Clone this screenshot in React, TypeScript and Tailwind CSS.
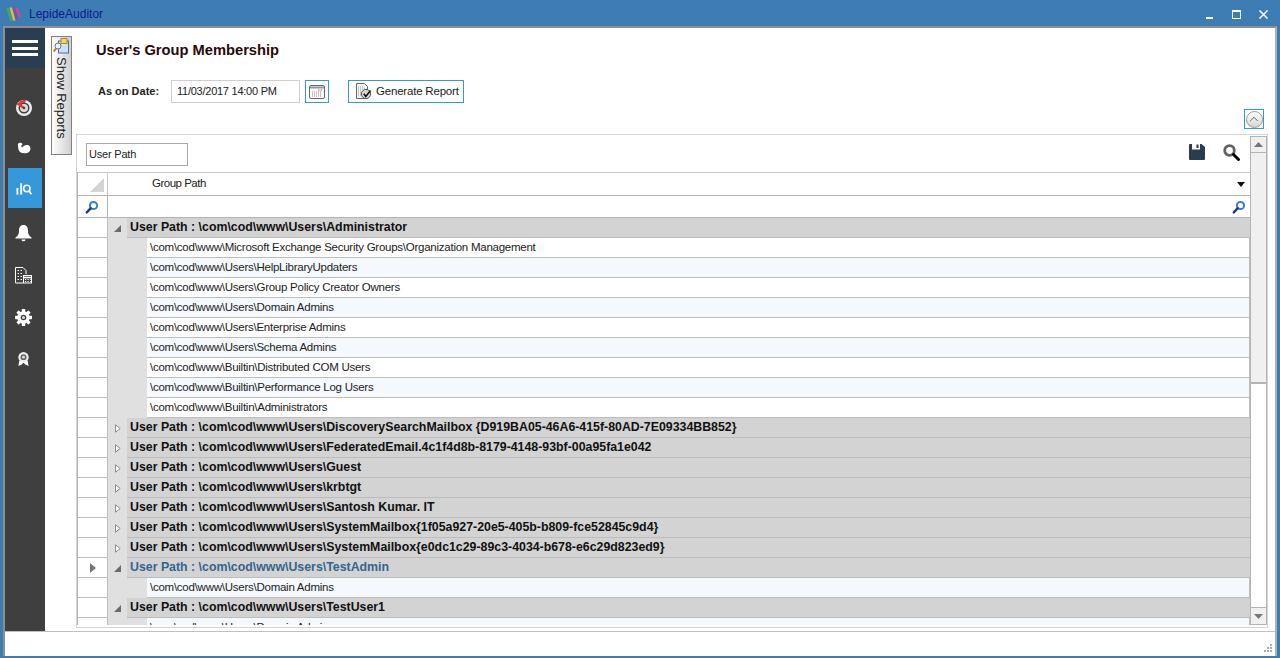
import { ChevronUp } from "lucide-react"

const groupRow = "flex h-5 items-center border-b border-[#bdbdbd] bg-[#d3d3d3]"

const SearchGlyph = ({ className = "" }: { className?: string }) => (
  <svg width="14" height="14" viewBox="0 0 14 14" className={className}>
    <circle cx="8.5" cy="5.5" r="3.6" fill="none" stroke="#3a7fc4" strokeWidth="2" />
    <path d="M5.8 8.2 1.8 12.4" stroke="#1c3f7c" strokeWidth="2.4" strokeLinecap="round" />
  </svg>
)

const Logo = () => (
  <svg width="16" height="16" viewBox="0 0 16 16">
    <path d="M0 2l3 0 3.5 13-2.5 0z" fill="#3aa76d" />
    <path d="M3.5 1.5l2.5 0 3.5 13-2.5 0z" fill="#e0c03a" />
    <path d="M6.5 1.5l2.5 0 3 12-2.5 0z" fill="#7b4fb5" />
    <path d="M9.5 2l2.5 0 3 9-2 0z" fill="#d9487a" />
  </svg>
)

const MenuIcon = () => (
  <div className="flex w-[26px] flex-col gap-[3.5px]">
    <div className="h-[3px] bg-white" />
    <div className="h-[3px] bg-white" />
    <div className="h-[3px] bg-white" />
  </div>
)

const DashIcon = () => (
  <svg width="18" height="18" viewBox="0 0 18 18">
    <circle cx="9" cy="9" r="8" fill="#eee" />
    <circle cx="9" cy="9" r="5.5" fill="#3f3f3f" />
    <circle cx="9" cy="9" r="4" fill="#ddd" />
    <path d="M2.5 4.5 9 9" stroke="#e0392f" strokeWidth="2.4" />
    <path d="M3 4.5A8 8 0 0 1 11 1.3L10 4A5.5 5.5 0 0 0 5 5.5z" fill="#e0392f" />
    <circle cx="9" cy="9" r="1.3" fill="#444" />
  </svg>
)

const ArmIcon = () => (
  <svg width="14" height="12" viewBox="0 0 16 13">
    <path d="M1 2.5C1 .8 3.5.2 5 .8L6.5 2 4.8 4 5.5 6C7 4.3 10 2.4 12.5 3.2 15 4 16 6.6 15 9 14 11.5 11.5 12.6 8.5 12.6 5.2 12.6 2.6 11.2 1.8 8.5 1.3 6.6 1 4.5 1 2.5z" fill="#fff" />
  </svg>
)

const ReportIcon = () => (
  <svg width="16" height="15" viewBox="0 0 17 15" fill="#fff">
    <rect x="0.5" y="7" width="2" height="7" />
    <rect x="4.5" y="2" width="2" height="12" />
    <circle cx="11.5" cy="7.5" r="3.4" fill="none" stroke="#fff" strokeWidth="1.6" />
    <path d="M13.8 10 16.4 13.6" stroke="#fff" strokeWidth="2" />
  </svg>
)

const BellIcon = () => (
  <svg width="17" height="18" viewBox="0 0 17 18" fill="#fff">
    <path d="M8.5 1C11.8 1 13 3.6 13 6.8 13 10 14 11.8 16.5 13.6V14.6H.5V13.6C3 11.8 4 10 4 6.8 4 3.6 5.2 1 8.5 1z" />
    <path d="M6.5 15.4h4c0 1.2-.9 1.8-2 1.8s-2-.6-2-1.8z" />
  </svg>
)

const BuildingIcon = () => (
  <svg width="17" height="17" viewBox="0 0 17 17" fill="none" stroke="#fff">
    <path d="M8 16H.5V.5H8L11 3.5V7" />
    <rect x="8.5" y="8.5" width="8" height="7.5" />
    <path d="M8.5 10.5h8" strokeWidth="1.6" />
    <path d="M2.5 3.5h1.5M5.5 3.5h1.5M2.5 6.5h1.5M5.5 6.5h1.5M2.5 9.5h1.5M5.5 9.5h1.5M2.5 12.5h1.5M5.5 12.5h1.5M10 12.5h1.2M12.5 12.5h1.2M15 12.5h.8M10 14.5h1.2M12.5 14.5h1.2M15 14.5h.8" />
  </svg>
)

const GearIcon = () => (
  <svg width="17" height="17" viewBox="0 0 17 17">
    <circle cx="8.5" cy="8.5" r="6.2" fill="#fff" />
    {[0, 45, 90, 135, 180, 225, 270, 315].map((a) => (
      <rect key={a} x="6.8" y="0" width="3.4" height="3.4" rx="0.6" fill="#fff" transform={`rotate(${a} 8.5 8.5)`} />
    ))}
    <circle cx="8.5" cy="8.5" r="2.8" fill="#3f3f3f" />
    <circle cx="8.5" cy="8.5" r="1.5" fill="#ddd" />
  </svg>
)

const BadgeIcon = () => (
  <svg width="13" height="16" viewBox="0 0 14 16">
    <path d="M2.5 9.5 1.5 15.5 5 14 7 12 9 14 12.5 15.5 11.5 9.5z" fill="#fff" />
    <circle cx="7" cy="6" r="5.6" fill="#eee" />
    <circle cx="7" cy="6" r="3.2" fill="#666" />
    <circle cx="7" cy="6" r="1.5" fill="#ddd" />
  </svg>
)

const SideItem = ({ children, active, tall }: { children: React.ReactNode; active?: boolean; tall?: boolean }) => (
  <div className={`mx-[3px] flex items-center justify-center pr-[3px] ${tall ? "h-[42px]" : "h-10"} ${active ? "bg-[#3498db]" : ""}`}>{children}</div>
)

const CalendarIcon = () => (
  <svg width="16" height="15" viewBox="0 0 16 15">
    <rect x="0.5" y="1.5" width="15" height="13" rx="1.5" fill="#fff" stroke="#5d6b78" />
    <path d="M1 2.5h14v2H1z" fill="#8d99a5" />
    <path d="M9 6h1.5M11.5 6H13" stroke="#e0483c" />
    <path d="M3 8h10M3 10h10M3 12h10" stroke="#8a8a8a" strokeDasharray="1 1" />
  </svg>
)

const ReportDocIcon = () => (
  <svg width="17" height="17" viewBox="0 0 17 17" className="shrink-0">
    <path d="M1.5 .5h8l3 3v12h-11z" fill="#f5f5f5" stroke="#666" />
    <path d="M3 4h5M3 6h7M3 8h3M3 10h3M3 12h3" stroke="#999" strokeDasharray="1 1" />
    <circle cx="11" cy="11" r="4.6" fill="#d8d8d8" stroke="#555" />
    <path d="M8.8 10.8 10.8 13.4 15.5 7.5" fill="none" stroke="#111" strokeWidth="1.6" />
  </svg>
)

const FloppyIcon = () => (
  <svg width="16" height="16" viewBox="0 0 16 16">
    <path d="M0 1a1 1 0 0 1 1-1h2v5.5h8V0h1.5L16 3v12a1 1 0 0 1-1 1H1a1 1 0 0 1-1-1z" fill="#2a3d50" />
    <rect x="7.5" y="0.5" width="2" height="3.5" fill="#2a3d50" />
  </svg>
)

const BigSearchIcon = () => (
  <svg width="17" height="17" viewBox="0 0 17 17">
    <circle cx="6.5" cy="6.5" r="4.8" fill="none" stroke="#636363" strokeWidth="2.8" />
    <path d="M10.5 10.5 15.5 15.5" stroke="#000" strokeWidth="3" strokeLinecap="round" />
  </svg>
)

// expanded = filled dark triangle, collapsed = outlined one
const Expander = ({ open }: { open: boolean }) =>
  open ? (
    <svg width="7" height="7" viewBox="0 0 7 7"><path d="M7 0V7H0z" fill="#6b6b6b" /></svg>
  ) : (
    <svg width="6" height="9" viewBox="0 0 6 9"><path d="M.5.8 5.2 4.5.5 8.2z" fill="#fff" stroke="#8a8a8a" /></svg>
  )

type Row =
  | { kind: "group"; text: string; open: boolean; current?: boolean }
  | { kind: "item"; text: string; alt?: boolean }

const rows: Row[] = [
  { kind: "group", text: "\\com\\cod\\www\\Users\\Administrator", open: true },
  { kind: "item", text: "\\com\\cod\\www\\Microsoft Exchange Security Groups\\Organization Management" },
  { kind: "item", text: "\\com\\cod\\www\\Users\\HelpLibraryUpdaters", alt: true },
  { kind: "item", text: "\\com\\cod\\www\\Users\\Group Policy Creator Owners" },
  { kind: "item", text: "\\com\\cod\\www\\Users\\Domain Admins", alt: true },
  { kind: "item", text: "\\com\\cod\\www\\Users\\Enterprise Admins" },
  { kind: "item", text: "\\com\\cod\\www\\Users\\Schema Admins", alt: true },
  { kind: "item", text: "\\com\\cod\\www\\Builtin\\Distributed COM Users" },
  { kind: "item", text: "\\com\\cod\\www\\Builtin\\Performance Log Users", alt: true },
  { kind: "item", text: "\\com\\cod\\www\\Builtin\\Administrators" },
  { kind: "group", text: "\\com\\cod\\www\\Users\\DiscoverySearchMailbox {D919BA05-46A6-415f-80AD-7E09334BB852}", open: false },
  { kind: "group", text: "\\com\\cod\\www\\Users\\FederatedEmail.4c1f4d8b-8179-4148-93bf-00a95fa1e042", open: false },
  { kind: "group", text: "\\com\\cod\\www\\Users\\Guest", open: false },
  { kind: "group", text: "\\com\\cod\\www\\Users\\krbtgt", open: false },
  { kind: "group", text: "\\com\\cod\\www\\Users\\Santosh Kumar. IT", open: false },
  { kind: "group", text: "\\com\\cod\\www\\Users\\SystemMailbox{1f05a927-20e5-405b-b809-fce52845c9d4}", open: false },
  { kind: "group", text: "\\com\\cod\\www\\Users\\SystemMailbox{e0dc1c29-89c3-4034-b678-e6c29d823ed9}", open: false },
  { kind: "group", text: "\\com\\cod\\www\\Users\\TestAdmin", open: true, current: true },
  { kind: "item", text: "\\com\\cod\\www\\Users\\Domain Admins", alt: true },
  { kind: "group", text: "\\com\\cod\\www\\Users\\TestUser1", open: true },
  { kind: "item", text: "\\com\\cod\\www\\Users\\Domain Admins", alt: true },
]

export default function App() {
  return (
    <div className="flex h-[658px] w-[1280px] flex-col overflow-hidden bg-[#3e7cb4] px-[3px] pb-[2px] font-['Liberation_Sans',sans-serif] text-xs text-[#222]">
      {/* Title bar */}
      <div className="flex h-[26px] shrink-0 items-center justify-between pt-[2px]">
        <div className="flex items-center gap-[7px] pl-[3px]">
          <Logo />
          <span className="text-[12px] text-[#0b1d8c]">LepideAuditor</span>
        </div>
        <div className="flex items-center gap-[18px] pr-[9px] pt-[1px]">
          <div className="mr-px mt-[6px] h-[2px] w-[7px] bg-white" />
          <div className="h-[9px] w-[9px] border border-t-2 border-white" />
          <svg width="9" height="9" viewBox="0 0 9 9"><path d="M.5.5l8 8M8.5.5l-8 8" stroke="#fff" strokeWidth="1.5" /></svg>
        </div>
      </div>

      <div className="flex min-h-0 flex-1 flex-col border-x-2 border-t-2 border-[#8e8e8e] border-r-[#b0b0b0] bg-white">
        <div className="flex min-h-0 flex-1 border-b border-[#c0c0c0]">
          {/* Sidebar */}
          <aside className="flex w-10 shrink-0 flex-col bg-[#3f3f3f]">
            <div className="mb-5 flex h-10 items-center justify-center bg-[#2b3d50]"><MenuIcon /></div>
            <SideItem><DashIcon /></SideItem>
            <SideItem><ArmIcon /></SideItem>
            <SideItem active><ReportIcon /></SideItem>
            <div className="h-1" />
            <SideItem tall><BellIcon /></SideItem>
            <SideItem tall><BuildingIcon /></SideItem>
            <SideItem tall><GearIcon /></SideItem>
            <SideItem tall><BadgeIcon /></SideItem>
          </aside>

          {/* Show Reports tab */}
          <div className="w-[31px] shrink-0 pl-[6px] pt-2">
            <div className="flex h-[119px] w-[21px] flex-col items-center border border-[#808080] bg-gradient-to-r from-white to-[#d0d0d0]">
              <svg width="17" height="16" viewBox="0 0 17 16" className="mt-[1px] shrink-0">
                <rect x="5.5" y="3" width="10" height="12" fill="#cfe0f5" stroke="#4d6fa8" />
                <rect x="8" y="0.5" width="6" height="5" fill="#f2d56b" stroke="#a98a2a" />
                <circle cx="5" cy="8" r="3" fill="#e8f2fb" stroke="#777" />
                <path d="M3 10.5 .8 13.5" stroke="#b5762a" strokeWidth="2" />
              </svg>
              <span className="mt-[3px] text-[13px] leading-[19px] [writing-mode:vertical-rl]">Show Reports</span>
            </div>
          </div>

          {/* Content */}
          <main className="flex min-w-0 flex-1 flex-col pr-[7px]">
            <h1 className="pl-5 pt-[12px] text-[14.7px] font-bold leading-5 text-[#2a0808]">User's Group Membership</h1>

            <div className="mt-5 flex h-[23px] items-center pl-[22px]">
              <span className="w-[73px] text-[11px] font-bold text-[#222]">As on Date:</span>
              <div className="flex h-[23px] w-[129px] items-center border border-[#cfcfcf] pl-[5px] text-[11px] tracking-[-0.25px]">11/03/2017 14:00 PM</div>
              <div className="ml-[5px] flex h-[23px] w-6 items-center justify-center border border-[#3498db]"><CalendarIcon /></div>
              <div className="ml-[19px] flex h-[23px] w-[116px] items-center gap-[4px] border border-[#3498db] pl-[6px] text-[11.5px] tracking-[-0.2px]">
                <ReportDocIcon />
                <span className="whitespace-nowrap pt-[1px]">Generate Report</span>
              </div>
            </div>

            <div className="mt-[6px] flex h-5 justify-end pr-[4px]">
              <div className="flex h-5 w-5 items-center justify-center border border-[#3498db]">
                <div className="flex h-[17px] w-[17px] items-center justify-center rounded-full border border-[#9a9a9a] bg-gradient-to-b from-white to-[#d5d5d5]">
                  <ChevronUp size={14} strokeWidth={1.5} color="#555" />
                </div>
              </div>
            </div>

            {/* Report panel */}
            <section className="mb-[3px] mt-[5px] flex min-h-0 flex-1 border border-[#d4d4d4] pb-[2px]">
              <div className="flex min-w-0 flex-1 flex-col">
                <div className="flex h-[37px] shrink-0 items-start justify-between pl-[9px] pr-[10px] pt-2">
                  <div className="flex h-[23px] w-[102px] items-center border border-[#a8a8a8] pl-[2px] text-[11px] tracking-[-0.2px]">User Path</div>
                  <div className="mt-[1px] flex items-start gap-[18px]">
                    <FloppyIcon />
                    <BigSearchIcon />
                  </div>
                </div>

                <div className="flex min-h-0 flex-1 flex-col overflow-hidden border-l border-[#b4b4b4]">
                  {/* Column header */}
                  <div className="flex h-6 shrink-0 border-y border-[#c8c8c8] border-b-[#b4b4b4]">
                    <div className="flex w-[30px] shrink-0 items-end justify-end border-r border-[#c8c8c8] pb-[3px] pr-[3px]">
                      <svg width="14" height="14" viewBox="0 0 14 14"><path d="M14 0V14H0z" fill="#d4d4d4" /></svg>
                    </div>
                    <div className="flex flex-1 items-center justify-between pl-[44px] pr-[5px] text-[11.5px] tracking-[-0.5px]">
                      <span>Group Path</span>
                      <svg width="8" height="5" viewBox="0 0 8 5"><path d="M0 0h8L4 5z" fill="#111" /></svg>
                    </div>
                  </div>

                  {/* Filter row */}
                  <div className="flex h-[22px] shrink-0 items-center border-b border-[#b4b4b4]">
                    <div className="flex h-full w-[30px] shrink-0 items-center justify-center border-r border-[#b4b4b4] pr-[2px]"><SearchGlyph /></div>
                    <div className="flex flex-1 justify-end pr-[4px]"><SearchGlyph /></div>
                  </div>

                  {/* Rows */}
                  <div className="min-h-0 flex-1 overflow-hidden">
                    {rows.map((row, i) => (
                      <div key={i} className="flex h-5">
                        <div className="flex w-[30px] shrink-0 items-center justify-center border-b border-r border-[#bdbdbd]">
                          {row.kind === "group" && row.current && (
                            <svg width="6" height="10" viewBox="0 0 6 10"><path d="M0 0l6 5-6 5z" fill="#777" /></svg>
                          )}
                        </div>
                        {row.kind === "group" ? (
                          <div className="flex min-w-0 flex-1 bg-[#e0e0e0]">
                            <div className="flex h-5 w-[19px] shrink-0 items-center justify-center"><Expander open={row.open} /></div>
                            <div className={`${groupRow} min-w-0 flex-1 pl-[3px] text-[12.35px] font-bold ${row.current ? "text-[#33658f]" : "text-[#111]"}`}>
                              <span className="whitespace-nowrap">User Path : {row.text}</span>
                            </div>
                          </div>
                        ) : (
                          <div className="flex min-w-0 flex-1 bg-[#e0e0e0] pl-[39px]">
                            <div className={`flex h-5 min-w-0 flex-1 items-center border-b border-r border-[#bdbdbd] pl-[3px] text-[11.5px] tracking-[-0.25px] ${row.alt ? "bg-[#f5f9fd]" : "bg-white"}`}>
                              <span className="whitespace-nowrap">{row.text}</span>
                            </div>
                          </div>
                        )}
                      </div>
                    ))}
                  </div>
                </div>
              </div>

              {/* Scrollbar */}
              <div className="mt-[1px] flex w-[17px] shrink-0 flex-col border border-[#b4b4b4]">
                <div className="flex h-[16px] shrink-0 items-center justify-center border-b border-[#b4b4b4] bg-[#f0f0f0]">
                  <svg width="9" height="5" viewBox="0 0 9 5"><path d="M4.5 0 9 5H0z" fill="#777" /></svg>
                </div>
                <div className="h-[231px] shrink-0 border-b-2 border-[#b4b4b4] bg-[#f0f0f0]" />
                <div className="flex-1 bg-white" />
                <div className="flex h-[17px] shrink-0 items-center justify-center border-t border-[#b4b4b4] bg-[#f0f0f0]">
                  <svg width="9" height="5" viewBox="0 0 9 5"><path d="M4.5 5 9 0H0z" fill="#777" /></svg>
                </div>
              </div>
            </section>
          </main>
        </div>

        {/* Status bar */}
        <div className="flex h-[24px] shrink-0 items-end justify-end pb-[3px] pr-[3px]">
          <svg width="9" height="9" viewBox="0 0 9 9" fill="#aaa">
            <rect x="7" y="0" width="2" height="2" />
            <rect x="4" y="3" width="2" height="2" />
            <rect x="7" y="3" width="2" height="2" />
            <rect x="1" y="6" width="2" height="2" />
            <rect x="4" y="6" width="2" height="2" />
            <rect x="7" y="6" width="2" height="2" />
          </svg>
        </div>
      </div>
    </div>
  )
}
